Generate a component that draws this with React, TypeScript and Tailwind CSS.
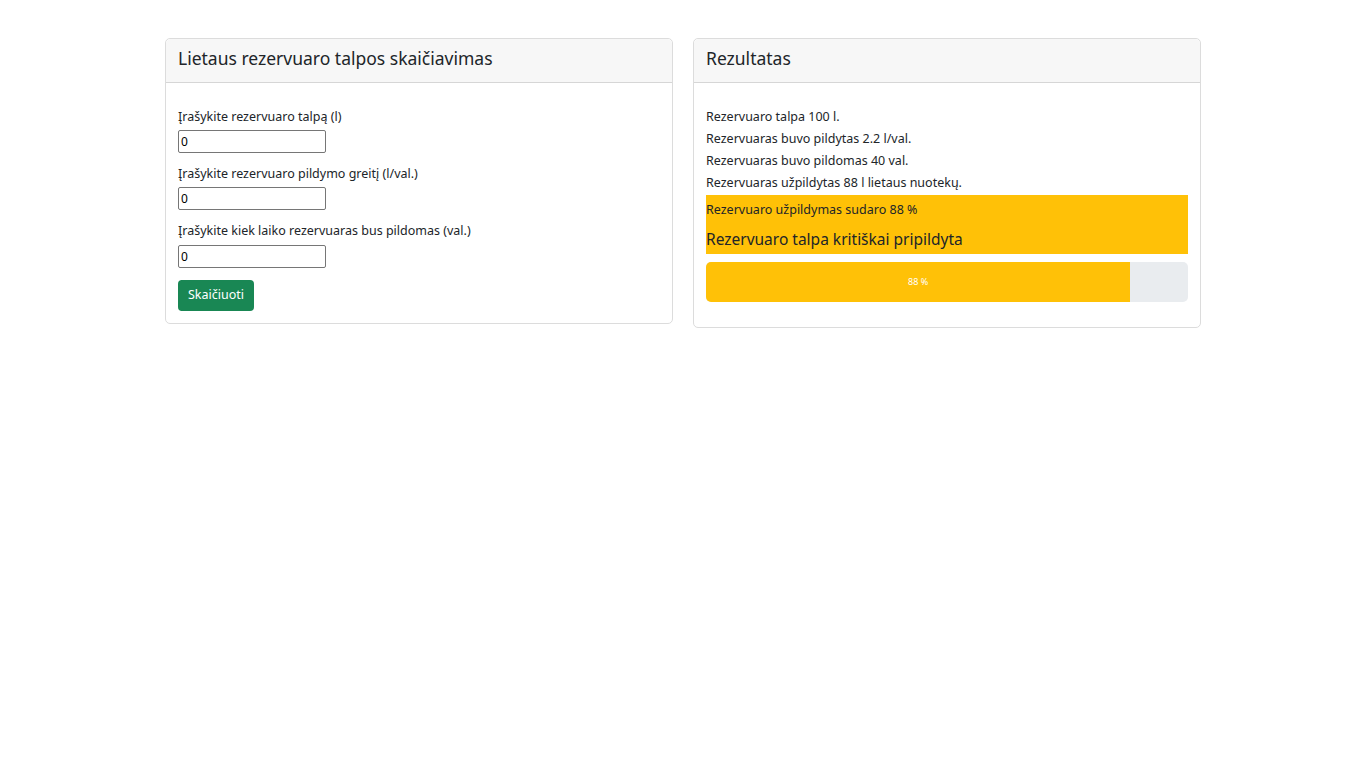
import React from 'react';

const labelCls = 'block leading-[20px]';
const inputCls =
  'block w-[148px] h-[23px] border border-[#767676] rounded-[2px] px-[2px] text-[12px] text-black bg-white';

const Card: React.FC<{ title: string; className?: string; children: React.ReactNode }> = ({
  title,
  className,
  children,
}) => (
  <div className={'w-[508px] border border-[#dcdcdc] rounded-[5px] bg-white ' + (className ?? '')}>
    <div className="h-[44px] bg-[#f7f7f7] border-b border-[#d6d6d6] rounded-t-[5px] px-[12px] pb-[4px] flex items-center">
      <h4 className="text-[17.5px] text-[#212529] leading-none">{title}</h4>
    </div>
    {children}
  </div>
);

export default function App() {
  const talpa = 100;
  const greitis = 2.2;
  const laikas = 40;
  const uzpildyta = Math.round(greitis * laikas);
  const procentai = Math.round((uzpildyta / talpa) * 100);

  return (
    <div
      className="min-h-screen bg-white text-[#212529] text-[12.5px]"
      style={{ fontFamily: '"Noto Sans", "Open Sans", sans-serif' }}
    >
      <div className="w-[1036px] ml-[165px] flex items-start gap-[20px] pt-[38px]">
        <Card title="Lietaus rezervuaro talpos skaičiavimas">
          <form className="px-[12px] pt-[24px] pb-[12px]" onSubmit={(e) => e.preventDefault()}>
            <label className={labelCls}>Įrašykite rezervuaro talpą (l)</label>
            <input className={inputCls + ' mt-[3px]'} defaultValue="0" />
            <label className={labelCls + ' mt-[11px]'}>Įrašykite rezervuaro pildymo greitį (l/val.)</label>
            <input className={inputCls + ' mt-[3px]'} defaultValue="0" />
            <label className={labelCls + ' mt-[11px]'}>Įrašykite kiek laiko rezervuaras bus pildomas (val.)</label>
            <input className={inputCls + ' mt-[4px]'} defaultValue="0" />
            <button
              type="submit"
              className="block mt-[12px] h-[31px] px-[10px] rounded-[4px] bg-[#198754] text-white text-[12.5px]"
            >
              Skaičiuoti
            </button>
          </form>
        </Card>

        <Card title="Rezultatas">
          <div className="px-[12px] pt-[23px] pb-[25px]">
            <p className="leading-[22px]">Rezervuaro talpa {talpa} l.</p>
            <p className="leading-[22px]">Rezervuaras buvo pildytas {greitis} l/val.</p>
            <p className="leading-[22px]">Rezervuaras buvo pildomas {laikas} val.</p>
            <p className="leading-[22px]">Rezervuaras užpildytas {uzpildyta} l lietaus nuotekų.</p>
            <div className="mt-[1px] bg-[#ffc107] pt-[4px] pb-[3px]">
              <p className="leading-[22px]">Rezervuaro užpildymas sudaro {procentai} %</p>
              <h5 className="text-[15.5px] leading-[24px] mt-[6px]">Rezervuaro talpa kritiškai pripildyta</h5>
            </div>
            <div className="mt-[8px] h-[40px] rounded-[5px] bg-[#e9ecef] overflow-hidden flex">
              <div
                className="h-full bg-[#ffc107] flex items-center justify-center text-white text-[9px]"
                style={{ width: `${procentai}%` }}
              >
                {procentai} %
              </div>
            </div>
          </div>
        </Card>
      </div>
    </div>
  );
}
